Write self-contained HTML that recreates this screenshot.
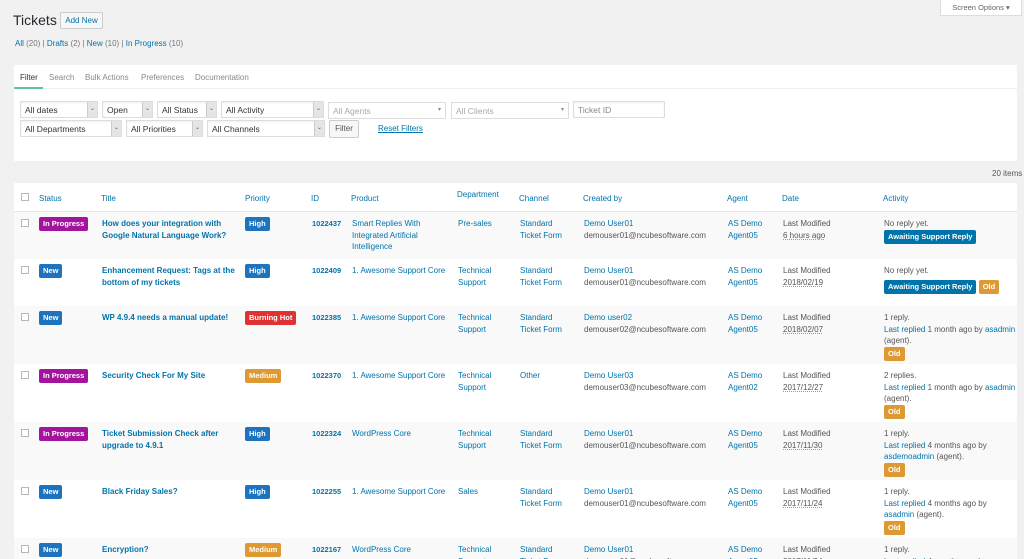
<!DOCTYPE html><html><head><meta charset="utf-8"><style>
*{box-sizing:border-box;margin:0;padding:0}
html,body{width:1024px;height:559px;overflow:hidden}
body{background:#f1f1f1;font-family:"Liberation Sans",sans-serif;font-size:8px;color:#555;position:relative}
.a{position:absolute;white-space:nowrap}
a,.l{color:#0073aa;text-decoration:none}
.sel{position:absolute;height:17px;background:#fff;border:1px solid #ddd;font-size:8.5px;color:#333;padding:3px 4px;box-shadow:inset 0 1px 2px rgba(0,0,0,.07)}
.sel i{position:absolute;right:0;top:0;width:10px;height:15px;background:#e5e5e5;border-left:1px solid #ccc;font-style:normal;font-size:6px;text-align:center;line-height:15px;color:#555}
.row{position:absolute;left:14px;width:1003px}
.c{position:absolute;line-height:11.5px;white-space:nowrap}
.cb{position:absolute;left:7px;width:8px;height:8px;border:1px solid #b4b9be;background:#fff}
.b{display:inline-block;color:#fff;font-weight:bold;font-size:7.5px;padding:2px 4px;border-radius:2px;line-height:10px}
.ip{background:#a3149d}.nw{background:#1e73be}.hi{background:#1e73be}.bh{background:#dd3333}.md{background:#dd9933}.aw{background:#0073aa}
.t{font-weight:bold;color:#0073aa}
u{text-decoration:underline dotted #999}
</style></head><body>
<div class="a" style="left:13px;top:12px;font-size:14px;color:#23282d">Tickets</div>
<div class="a" style="left:60px;top:12px;width:43px;height:17px;border:1px solid #ccc;background:#f7f7f7;border-radius:2px;color:#0073aa;font-size:8px;text-align:center;line-height:15px">Add New</div>
<div class="a" style="left:940px;top:0;width:82px;height:16px;background:#fff;border:1px solid #ddd;border-top:0;font-size:7.5px;color:#666;text-align:center;line-height:16px">Screen Options ▾</div>
<div class="a" style="left:15px;top:39px;font-size:8px;color:#777"><a>All</a> (20) | <a>Drafts</a> (2) | <a>New</a> (10) | <a>In Progress</a> (10)</div>
<div class="a" style="left:14px;top:65px;width:1003px;height:96px;background:#fff"></div>
<div class="a" style="left:14px;top:88px;width:1003px;height:1px;background:#eee"></div>
<div class="a" style="left:14px;top:87px;width:29px;height:2px;background:#5fc4a6"></div>
<div class="a" style="left:20px;top:73px;color:#333">Filter</div>
<div class="a" style="left:49px;top:73px;color:#888">Search</div>
<div class="a" style="left:85px;top:73px;color:#888">Bulk Actions</div>
<div class="a" style="left:141px;top:73px;color:#888">Preferences</div>
<div class="a" style="left:195px;top:73px;color:#888">Documentation</div>
<div class="sel" style="left:20px;top:101px;width:78px">All dates<i>⌄</i></div>
<div class="sel" style="left:102px;top:101px;width:51px">Open<i>⌄</i></div>
<div class="sel" style="left:157px;top:101px;width:60px">All Status<i>⌄</i></div>
<div class="sel" style="left:221px;top:101px;width:103px">All Activity<i>⌄</i></div>
<div class="sel" style="left:328px;top:102px;width:118px;color:#aaa;box-shadow:none">All Agents<span style="position:absolute;right:4px;color:#888;font-size:6px">▾</span></div>
<div class="sel" style="left:451px;top:102px;width:118px;color:#aaa;box-shadow:none">All Clients<span style="position:absolute;right:4px;color:#888;font-size:6px">▾</span></div>
<div class="sel" style="left:573px;top:101px;width:92px;color:#888">Ticket ID</div>
<div class="sel" style="left:20px;top:120px;width:102px">All Departments<i>⌄</i></div>
<div class="sel" style="left:126px;top:120px;width:77px">All Priorities<i>⌄</i></div>
<div class="sel" style="left:207px;top:120px;width:118px">All Channels<i>⌄</i></div>
<div class="a" style="left:329px;top:120px;width:30px;height:18px;border:1px solid #ccc;background:#f7f7f7;border-radius:2px;text-align:center;line-height:16px;color:#555">Filter</div>
<div class="a l" style="left:378px;top:124px;text-decoration:underline">Reset Filters</div>
<div class="a" style="left:992px;top:169px;color:#555">20 items</div>
<div class="row" style="top:183px;height:29px;background:#fff;border-bottom:1px solid #e5e5e5">
<div class="cb" style="top:10px"></div>
<div class="c l" style="left:25px;top:10px">Status</div><div class="c l" style="left:87px;top:10px">Title</div><div class="c l" style="left:231px;top:10px">Priority</div><div class="c l" style="left:297px;top:10px">ID</div><div class="c l" style="left:337px;top:10px">Product</div><div class="c l" style="left:443px;top:6px">Department</div><div class="c l" style="left:505px;top:10px">Channel</div><div class="c l" style="left:569px;top:10px">Created by</div><div class="c l" style="left:713px;top:10px">Agent</div><div class="c l" style="left:768px;top:10px">Date</div><div class="c l" style="left:869px;top:10px">Activity</div></div>

<div class="row" style="top:212px;height:47px;background:#f9f9f9">
<div class="cb" style="top:7px"></div><div class="c" style="left:25px;top:5px"><span class="b ip">In Progress</span></div>
<div class="c t" style="left:88px;top:6px">How does your integration with<br>Google Natural Language Work?</div>
<div class="c" style="left:231px;top:5px"><span class="b hi">High</span></div>
<div class="c t" style="left:298px;top:6px;font-size:7.5px">1022437</div>
<div class="c l" style="left:338px;top:6px">Smart Replies With<br>Integrated Artificial<br>Intelligence</div>
<div class="c l" style="left:444px;top:6px">Pre-sales</div>
<div class="c l" style="left:506px;top:6px">Standard<br>Ticket Form</div>
<div class="c" style="left:570px;top:6px"><a>Demo User01</a><br>demouser01@ncubesoftware.com</div>
<div class="c l" style="left:714px;top:6px">AS Demo<br>Agent05</div>
<div class="c" style="left:769px;top:6px">Last Modified<br><u>6 hours ago</u></div>
<div class="c" style="left:870px;top:6px">No reply yet.<br><span class="b aw">Awaiting Support Reply</span></div></div>

<div class="row" style="top:259px;height:47px;background:#fff">
<div class="cb" style="top:7px"></div><div class="c" style="left:25px;top:5px"><span class="b nw">New</span></div>
<div class="c t" style="left:88px;top:6px">Enhancement Request: Tags at the<br>bottom of my tickets</div>
<div class="c" style="left:231px;top:5px"><span class="b hi">High</span></div>
<div class="c t" style="left:298px;top:6px;font-size:7.5px">1022409</div>
<div class="c l" style="left:338px;top:6px">1. Awesome Support Core</div>
<div class="c l" style="left:444px;top:6px">Technical<br>Support</div>
<div class="c l" style="left:506px;top:6px">Standard<br>Ticket Form</div>
<div class="c" style="left:570px;top:6px"><a>Demo User01</a><br>demouser01@ncubesoftware.com</div>
<div class="c l" style="left:714px;top:6px">AS Demo<br>Agent05</div>
<div class="c" style="left:769px;top:6px">Last Modified<br><u>2018/02/19</u></div>
<div class="c" style="left:870px;top:6px">No reply yet.<br><span class="b aw" style="margin-top:3px">Awaiting Support Reply</span> <span class="b md">Old</span></div></div>

<div class="row" style="top:306px;height:58px;background:#f9f9f9">
<div class="cb" style="top:7px"></div><div class="c" style="left:25px;top:5px"><span class="b nw">New</span></div>
<div class="c t" style="left:88px;top:6px">WP 4.9.4 needs a manual update!</div>
<div class="c" style="left:231px;top:5px"><span class="b bh">Burning Hot</span></div>
<div class="c t" style="left:298px;top:6px;font-size:7.5px">1022385</div>
<div class="c l" style="left:338px;top:6px">1. Awesome Support Core</div>
<div class="c l" style="left:444px;top:6px">Technical<br>Support</div>
<div class="c l" style="left:506px;top:6px">Standard<br>Ticket Form</div>
<div class="c" style="left:570px;top:6px"><a>Demo user02</a><br>demouser02@ncubesoftware.com</div>
<div class="c l" style="left:714px;top:6px">AS Demo<br>Agent05</div>
<div class="c" style="left:769px;top:6px">Last Modified<br><u>2018/02/07</u></div>
<div class="c" style="left:870px;top:6px">1 reply.<br><a>Last replied</a> 1 month ago by <a>asadmin</a><br>(agent).<br><span class="b md">Old</span></div></div>

<div class="row" style="top:364px;height:58px;background:#fff">
<div class="cb" style="top:7px"></div><div class="c" style="left:25px;top:5px"><span class="b ip">In Progress</span></div>
<div class="c t" style="left:88px;top:6px">Security Check For My Site</div>
<div class="c" style="left:231px;top:5px"><span class="b md">Medium</span></div>
<div class="c t" style="left:298px;top:6px;font-size:7.5px">1022370</div>
<div class="c l" style="left:338px;top:6px">1. Awesome Support Core</div>
<div class="c l" style="left:444px;top:6px">Technical<br>Support</div>
<div class="c l" style="left:506px;top:6px">Other</div>
<div class="c" style="left:570px;top:6px"><a>Demo User03</a><br>demouser03@ncubesoftware.com</div>
<div class="c l" style="left:714px;top:6px">AS Demo<br>Agent02</div>
<div class="c" style="left:769px;top:6px">Last Modified<br><u>2017/12/27</u></div>
<div class="c" style="left:870px;top:6px">2 replies.<br><a>Last replied</a> 1 month ago by <a>asadmin</a><br>(agent).<br><span class="b md">Old</span></div></div>

<div class="row" style="top:422px;height:58px;background:#f9f9f9">
<div class="cb" style="top:7px"></div><div class="c" style="left:25px;top:5px"><span class="b ip">In Progress</span></div>
<div class="c t" style="left:88px;top:6px">Ticket Submission Check after<br>upgrade to 4.9.1</div>
<div class="c" style="left:231px;top:5px"><span class="b hi">High</span></div>
<div class="c t" style="left:298px;top:6px;font-size:7.5px">1022324</div>
<div class="c l" style="left:338px;top:6px">WordPress Core</div>
<div class="c l" style="left:444px;top:6px">Technical<br>Support</div>
<div class="c l" style="left:506px;top:6px">Standard<br>Ticket Form</div>
<div class="c" style="left:570px;top:6px"><a>Demo User01</a><br>demouser01@ncubesoftware.com</div>
<div class="c l" style="left:714px;top:6px">AS Demo<br>Agent05</div>
<div class="c" style="left:769px;top:6px">Last Modified<br><u>2017/11/30</u></div>
<div class="c" style="left:870px;top:6px">1 reply.<br><a>Last replied</a> 4 months ago by<br><a>asdemoadmin</a> (agent).<br><span class="b md">Old</span></div></div>

<div class="row" style="top:480px;height:58px;background:#fff">
<div class="cb" style="top:7px"></div><div class="c" style="left:25px;top:5px"><span class="b nw">New</span></div>
<div class="c t" style="left:88px;top:6px">Black Friday Sales?</div>
<div class="c" style="left:231px;top:5px"><span class="b hi">High</span></div>
<div class="c t" style="left:298px;top:6px;font-size:7.5px">1022255</div>
<div class="c l" style="left:338px;top:6px">1. Awesome Support Core</div>
<div class="c l" style="left:444px;top:6px">Sales</div>
<div class="c l" style="left:506px;top:6px">Standard<br>Ticket Form</div>
<div class="c" style="left:570px;top:6px"><a>Demo User01</a><br>demouser01@ncubesoftware.com</div>
<div class="c l" style="left:714px;top:6px">AS Demo<br>Agent05</div>
<div class="c" style="left:769px;top:6px">Last Modified<br><u>2017/11/24</u></div>
<div class="c" style="left:870px;top:6px">1 reply.<br><a>Last replied</a> 4 months ago by<br><a>asadmin</a> (agent).<br><span class="b md">Old</span></div></div>

<div class="row" style="top:538px;height:21px;background:#f9f9f9;overflow:hidden">
<div class="cb" style="top:7px"></div><div class="c" style="left:25px;top:5px"><span class="b nw">New</span></div>
<div class="c t" style="left:88px;top:6px">Encryption?</div>
<div class="c" style="left:231px;top:5px"><span class="b md">Medium</span></div>
<div class="c t" style="left:298px;top:6px;font-size:7.5px">1022167</div>
<div class="c l" style="left:338px;top:6px">WordPress Core</div>
<div class="c l" style="left:444px;top:6px">Technical<br>Support</div>
<div class="c l" style="left:506px;top:6px">Standard<br>Ticket Form</div>
<div class="c" style="left:570px;top:6px"><a>Demo User01</a><br>demouser01@ncubesoftware.com</div>
<div class="c l" style="left:714px;top:6px">AS Demo<br>Agent05</div>
<div class="c" style="left:769px;top:6px">Last Modified<br><u>2017/11/24</u></div>
<div class="c" style="left:870px;top:6px">1 reply.<br><a>Last replied</a> 4 months ago by</div></div>
</body></html>
